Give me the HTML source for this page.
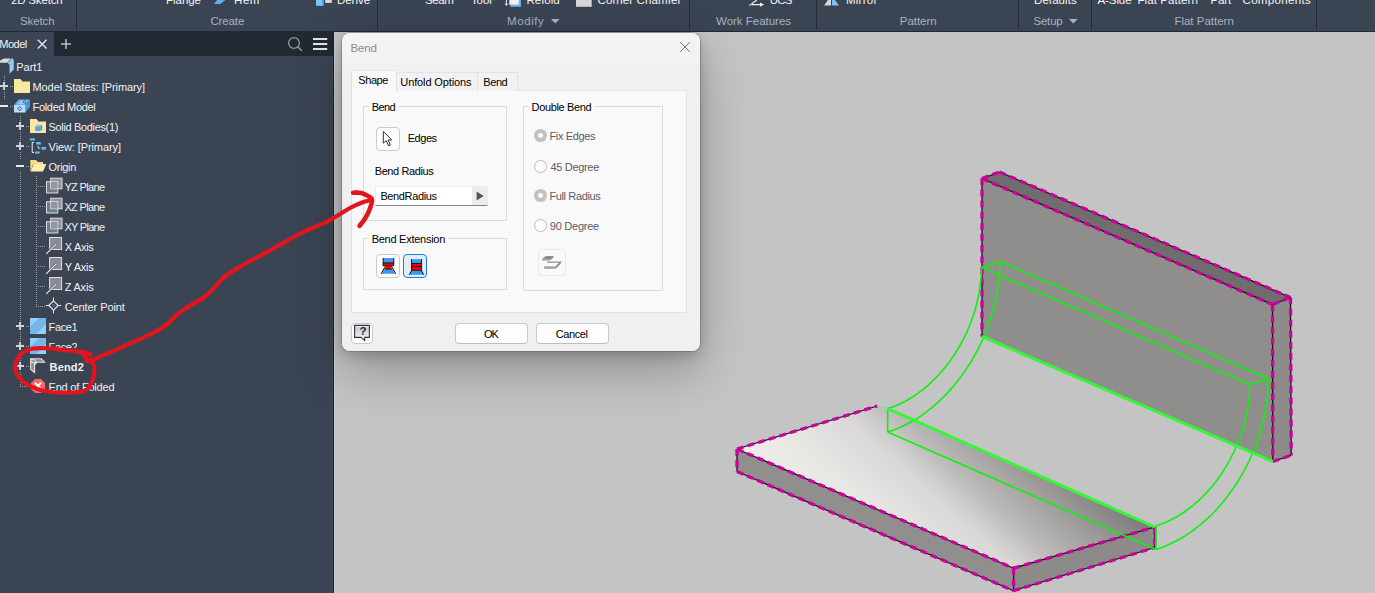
<!DOCTYPE html>
<html lang="en">
<head>
<meta charset="utf-8">
<title>Bend</title>
<style>
*{box-sizing:border-box;margin:0;padding:0}
html,body{width:1375px;height:593px;overflow:hidden}
body{position:relative;background:#c4c4c4;font-family:"Liberation Sans",sans-serif;font-size:11px;color:#e9e9e9}
.a{position:absolute}
#ribbon{position:absolute;left:0;top:0;width:1375px;height:31px;background:#3b4453}
#ribline{position:absolute;left:0;top:30.7px;width:1375px;height:1.3px;background:#222933}
.rdiv{position:absolute;top:0;width:1px;height:30px;background:#262c37}
.rlab{position:absolute;top:13.2px;height:16px;line-height:16px;font-size:11.5px;color:#a7b2c3;white-space:nowrap}
.rtop{position:absolute;top:-8.3px;height:16px;line-height:16px;font-size:11.5px;color:#f4f5f7;white-space:nowrap}
#panel{position:absolute;left:0;top:32px;width:334px;height:561px;background:#3b4453;border-right:1px solid #1c212b;box-shadow:inset -1px 0 0 #414a5a,1px 0 0 #cecece}
#tabbar{position:absolute;left:0;top:0;width:333px;height:24px;background:#222933}
#tabmodel{position:absolute;left:0;top:0;width:54px;height:24px;background:#3b4453}
.t{position:absolute;height:20px;line-height:20px;font-size:11px;color:#f2f2f2;white-space:nowrap}
.dv{position:absolute;width:0;border-left:1px dotted #8d94a0}
.dh{position:absolute;height:0;border-top:1px dotted #8d94a0}
#dlg{position:absolute;left:342px;top:33px;width:358px;height:318px;background:#f0f0f0;border-radius:8px;box-shadow:0 0 0 1px rgba(95,95,95,.42),0 20px 50px rgba(0,0,0,.26),0 4px 14px rgba(0,0,0,.2);color:#000;font-size:11px}
#dlgtitle{position:absolute;left:0;top:0;width:358px;height:30px;background:#f3f3f3;border-radius:8px 8px 0 0}
.d{position:absolute;white-space:nowrap;height:14px;line-height:14px;color:#000}
.grp{position:absolute;border:1px solid #dcdcdc}
.gl{position:absolute;background:#fafafa;padding:0 3px;height:14px;line-height:14px;white-space:nowrap;color:#000}
.btn{position:absolute;border:1px solid #c9c9c9;border-radius:4px;background:#fdfdfd}
</style>
</head>
<body>
<svg class="a" style="left:0;top:0" width="1375" height="593" viewBox="0 0 1375 593">
<defs>
<linearGradient id="gtop" gradientUnits="userSpaceOnUse" x1="0" y1="0" x2="0.855" y2="1.112" gradientTransform="matrix(276.6 119.20000000000005 140.20000000000005 -43 737 449)"><stop offset="0" stop-color="#efede9"/><stop offset="0.217" stop-color="#e8e6e3"/><stop offset="0.435" stop-color="#dad8d6"/><stop offset="0.5" stop-color="#cfcdcb"/><stop offset="0.565" stop-color="#c0bebc"/><stop offset="0.783" stop-color="#9d9b9a"/><stop offset="1" stop-color="#7b7978"/></linearGradient>
<linearGradient id="gback" x1="0" y1="0" x2="1" y2="1"><stop offset="0" stop-color="#8f8d8c"/><stop offset="1" stop-color="#939190"/></linearGradient>
</defs>
<polygon points="982.0,178.5 1272.5,304.5 1272.8,461.5 982.0,336.5" fill="#908e8d" />
<polygon points="982.0,178.5 999.6,172.0 1290.5,297.5 1272.5,304.5" fill="#6f6d6d" />
<polygon points="1272.5,304.5 1290.5,297.5 1291.2,455.3 1272.8,461.5" fill="#8e8c8b" />
<polygon points="737.0,449.0 877.2,406.0 1154.8,527.0 1013.6,568.2" fill="url(#gtop)" />
<polygon points="737.0,449.0 1013.6,568.2 1013.6,590.7 737.0,471.5" fill="#918f8e" />
<polygon points="1013.6,568.2 1154.8,527.0 1154.8,547.5 1013.6,590.7" fill="#8d8b8a" />
<path d="M982.0 178.5L999.6 172.0" stroke="#141414" stroke-width="1.25" fill="none"/>
<path d="M982.0 178.5L999.6 172.0" stroke="#c80399" stroke-width="3.3" stroke-dasharray="6.8 4.3" fill="none"/>
<path d="M999.6 172.0L1290.5 297.5" stroke="#141414" stroke-width="1.25" fill="none"/>
<path d="M999.6 172.0L1290.5 297.5" stroke="#c80399" stroke-width="3.3" stroke-dasharray="6.8 4.3" fill="none"/>
<path d="M982.0 178.5L1272.5 304.5" stroke="#141414" stroke-width="1.25" fill="none"/>
<path d="M982.0 178.5L1272.5 304.5" stroke="#c80399" stroke-width="3.3" stroke-dasharray="6.8 4.3" fill="none"/>
<path d="M1272.5 304.5L1290.5 297.5" stroke="#141414" stroke-width="1.25" fill="none"/>
<path d="M1272.5 304.5L1290.5 297.5" stroke="#c80399" stroke-width="3.3" stroke-dasharray="6.8 4.3" fill="none"/>
<path d="M1272.5 304.5L1272.8 461.5" stroke="#141414" stroke-width="1.25" fill="none"/>
<path d="M1272.5 304.5L1272.8 461.5" stroke="#c80399" stroke-width="3.3" stroke-dasharray="6.8 4.3" fill="none"/>
<path d="M1290.5 297.5L1291.2 455.3" stroke="#141414" stroke-width="1.25" fill="none"/>
<path d="M1290.5 297.5L1291.2 455.3" stroke="#c80399" stroke-width="3.3" stroke-dasharray="6.8 4.3" fill="none"/>
<path d="M1272.8 461.5L1291.2 455.3" stroke="#141414" stroke-width="1.25" fill="none"/>
<path d="M1272.8 461.5L1291.2 455.3" stroke="#c80399" stroke-width="3.3" stroke-dasharray="6.8 4.3" fill="none"/>
<path d="M982.0 178.5L982.0 336.5" stroke="#141414" stroke-width="1.25" fill="none"/>
<path d="M982.0 178.5L982.0 336.5" stroke="#c80399" stroke-width="3.3" stroke-dasharray="6.8 4.3" fill="none"/>
<path d="M737.0 449.0L877.2 406.0" stroke="#141414" stroke-width="1.25" fill="none"/>
<path d="M737.0 449.0L877.2 406.0" stroke="#c80399" stroke-width="3.3" stroke-dasharray="6.8 4.3" fill="none"/>
<path d="M737.0 449.0L1013.6 568.2" stroke="#141414" stroke-width="1.25" fill="none"/>
<path d="M737.0 449.0L1013.6 568.2" stroke="#c80399" stroke-width="3.3" stroke-dasharray="6.8 4.3" fill="none"/>
<path d="M737.0 449.0L737.0 471.5" stroke="#141414" stroke-width="1.25" fill="none"/>
<path d="M737.0 449.0L737.0 471.5" stroke="#c80399" stroke-width="3.3" stroke-dasharray="6.8 4.3" fill="none"/>
<path d="M737.0 471.5L1013.6 590.7" stroke="#141414" stroke-width="1.25" fill="none"/>
<path d="M737.0 471.5L1013.6 590.7" stroke="#c80399" stroke-width="3.3" stroke-dasharray="6.8 4.3" fill="none"/>
<path d="M1013.6 568.2L1013.6 590.7" stroke="#141414" stroke-width="1.25" fill="none"/>
<path d="M1013.6 568.2L1013.6 590.7" stroke="#c80399" stroke-width="3.3" stroke-dasharray="6.8 4.3" fill="none"/>
<path d="M1013.6 568.2L1154.8 527.0" stroke="#141414" stroke-width="1.25" fill="none"/>
<path d="M1013.6 568.2L1154.8 527.0" stroke="#c80399" stroke-width="3.3" stroke-dasharray="6.8 4.3" fill="none"/>
<path d="M1013.6 590.7L1154.8 547.5" stroke="#141414" stroke-width="1.25" fill="none"/>
<path d="M1013.6 590.7L1154.8 547.5" stroke="#c80399" stroke-width="3.3" stroke-dasharray="6.8 4.3" fill="none"/>
<path d="M1154.8 527.0L1154.8 547.5" stroke="#141414" stroke-width="1.25" fill="none"/>
<path d="M1154.8 527.0L1154.8 547.5" stroke="#c80399" stroke-width="3.3" stroke-dasharray="6.8 4.3" fill="none"/>
<polyline points="887.7,408.6 892.6,406.9 897.5,405.0 902.4,402.7 907.2,400.2 912.0,397.3 916.7,394.2 921.3,390.8 925.8,387.2 930.2,383.3 934.6,379.2 938.7,374.8 942.8,370.2 946.7,365.4 950.4,360.4 954.0,355.3 957.3,350.0 960.5,344.5 963.5,338.9 966.3,333.2 968.8,327.4 971.2,321.5 973.3,315.5 975.2,309.5 976.8,303.4 978.2,297.3 979.4,291.3 980.2,285.2 980.9,279.1 981.3,273.1 981.4,267.2" stroke="#0df20d" stroke-width="1.6" fill="none" stroke-linejoin="round"/>
<polyline points="887.7,432.1 893.6,430.1 899.4,427.8 905.3,425.0 911.0,422.0 916.8,418.6 922.4,414.8 927.9,410.7 933.4,406.3 938.7,401.6 943.9,396.7 948.9,391.4 953.7,385.9 958.4,380.1 962.8,374.1 967.1,367.9 971.2,361.5 975.0,354.9 978.6,348.1 981.9,341.2 985.0,334.2 987.8,327.1 990.3,319.9 992.5,312.6 994.5,305.3 996.2,297.9 997.5,290.6 998.6,283.2 999.4,275.9 999.8,268.7 1000.0,261.5" stroke="#0df20d" stroke-width="1.6" fill="none" stroke-linejoin="round"/>
<polyline points="1156.0,525.9 1160.9,524.2 1165.8,522.3 1170.7,520.0 1175.5,517.5 1180.3,514.6 1185.0,511.5 1189.6,508.1 1194.1,504.5 1198.5,500.6 1202.8,496.5 1207.0,492.1 1211.1,487.5 1215.0,482.7 1218.7,477.7 1222.3,472.6 1225.6,467.3 1228.8,461.8 1231.8,456.2 1234.6,450.5 1237.1,444.7 1239.5,438.8 1241.6,432.8 1243.5,426.8 1245.1,420.7 1246.5,414.6 1247.7,408.6 1248.5,402.5 1249.2,396.4 1249.6,390.4 1249.7,384.5" stroke="#0df20d" stroke-width="1.6" fill="none" stroke-linejoin="round"/>
<polyline points="1156.0,549.4 1161.9,547.4 1167.7,545.1 1173.6,542.3 1179.3,539.3 1185.1,535.9 1190.7,532.1 1196.2,528.0 1201.7,523.6 1207.0,518.9 1212.2,514.0 1217.2,508.7 1222.0,503.2 1226.7,497.4 1231.1,491.4 1235.4,485.2 1239.5,478.8 1243.3,472.2 1246.9,465.4 1250.2,458.5 1253.3,451.5 1256.1,444.4 1258.6,437.2 1260.8,429.9 1262.8,422.6 1264.5,415.2 1265.8,407.9 1266.9,400.5 1267.7,393.2 1268.1,386.0 1268.3,378.8" stroke="#0df20d" stroke-width="1.6" fill="none" stroke-linejoin="round"/>
<polyline points="887.7,408.6 887.7,432.1" stroke="#0df20d" stroke-width="1.6" fill="none" stroke-linejoin="round"/>
<polyline points="1156.0,525.9 1156.0,549.4" stroke="#0df20d" stroke-width="1.6" fill="none" stroke-linejoin="round"/>
<polyline points="887.7,432.1 1156.0,549.4" stroke="#0df20d" stroke-width="1.6" fill="none" stroke-linejoin="round"/>
<polyline points="981.4,267.2 1000.0,261.5" stroke="#0df20d" stroke-width="1.6" fill="none" stroke-linejoin="round"/>
<polyline points="1249.7,384.5 1268.3,378.8" stroke="#0df20d" stroke-width="1.6" fill="none" stroke-linejoin="round"/>
<polyline points="981.4,267.2 1249.7,384.5" stroke="#0df20d" stroke-width="1.6" fill="none" stroke-linejoin="round"/>
<polyline points="1000.0,261.5 1268.3,378.8" stroke="#0df20d" stroke-width="1.6" fill="none" stroke-linejoin="round"/>
<polyline points="877.2,406.0 887.7,408.6" stroke="#7fe07f" stroke-width="1.2" fill="none" stroke-linejoin="round"/>
<polyline points="887.7,408.6 1154.8,527.0" stroke="#36f636" stroke-width="3" fill="none" stroke-linejoin="round"/>
<polyline points="982.0,336.5 1272.8,461.5" stroke="#36f636" stroke-width="3" fill="none" stroke-linejoin="round"/>
</svg>
<div id="ribbon">
<div class="rdiv" style="left:76px"></div><div class="rdiv" style="left:377px"></div><div class="rdiv" style="left:689px"></div><div class="rdiv" style="left:816px"></div><div class="rdiv" style="left:1018px"></div><div class="rdiv" style="left:1091px"></div><div class="rdiv" style="left:1316px"></div><div class="rlab" style="left:20px;letter-spacing:-0.112px">Sketch</div><div class="rlab" style="left:210.4px;letter-spacing:-0.122px">Create</div><div class="rlab" style="left:507px;letter-spacing:0.587px">Modify</div><div class="rlab" style="left:716px;letter-spacing:-0.016px">Work Features</div><div class="rlab" style="left:899.8px;letter-spacing:-0.04px">Pattern</div><div class="rlab" style="left:1033.4px;letter-spacing:-0.173px">Setup</div><div class="rlab" style="left:1174.4px;letter-spacing:-0.004px">Flat Pattern</div><svg class="a" style="left:551px;top:19px" width="9" height="5" viewBox="0 0 9 5"><path d="M0 0H8.6L4.3 4.4Z" fill="#a7b2c3"/></svg><svg class="a" style="left:1069px;top:19px" width="9" height="5" viewBox="0 0 9 5"><path d="M0 0H8.6L4.3 4.4Z" fill="#a7b2c3"/></svg><div class="rtop" style="left:11px;letter-spacing:-0.174px">2D Sketch</div><div class="rtop" style="left:166px;letter-spacing:-0.029px">Flange</div><div class="rtop" style="left:234px;letter-spacing:0.573px">Hem</div><div class="rtop" style="left:337px;letter-spacing:-0.039px">Derive</div><div class="rtop" style="left:425px;letter-spacing:-0.387px">Seam</div><div class="rtop" style="left:471px;letter-spacing:-0.127px">Tool</div><div class="rtop" style="left:526.5px;letter-spacing:-0.008px">Refold</div><div class="rtop" style="left:597.5px;letter-spacing:0.11px">Corner Chamfer</div><div class="rtop" style="left:769.7px;letter-spacing:-0.827px">UCS</div><div class="rtop" style="left:846px;letter-spacing:0.245px">Mirror</div><div class="rtop" style="left:1034px;letter-spacing:0.077px">Defaults</div><div class="rtop" style="left:1097.5px;letter-spacing:-0.089px">A-Side</div><div class="rtop" style="left:1137.5px;letter-spacing:0.087px">Flat Pattern</div><div class="rtop" style="left:1210.5px;letter-spacing:-0.148px">Part</div><div class="rtop" style="left:1242.5px;letter-spacing:0.328px">Components</div><svg class="a" style="left:0;top:0" width="1375" height="12" viewBox="0 0 1375 12">
<path d="M214 3.9H220.3L225.4 0H217.2Z" fill="#5fb0f0"/>
<rect x="316" y="0" width="7.6" height="5.8" fill="#7cc4f8"/><rect x="322.2" y="0" width="1.4" height="5.8" fill="#4a9fe0"/>
<rect x="325.2" y="0" width="6.6" height="2.9" fill="#dcdcdc"/>
<path d="M506.4 0V5M505 3.6L506.4 5.4L507.8 3.6" stroke="#f0f0f0" stroke-width="1" fill="none"/>
<path d="M510.3 4.8H518.9V0H520.9V6.8H510.3Z" fill="#6ab8f5"/>
<rect x="509.3" y="0" width="9.6" height="4.8" fill="#f0f0f0"/>
<rect x="576" y="0" width="15.7" height="6.8" fill="#d6d6d6"/>
<rect x="749" y="3.8" width="2" height="2" fill="#4db0f5"/>
<path d="M751.2 4.6H763M751.4 4L756.8 0" stroke="#f0f0f0" stroke-width="1.1" fill="none"/>
<path d="M760 2.4L764 4.6L760 6.8Z" fill="#f0f0f0"/>
<path d="M824 5.6H831V0H828Z" fill="#d8d8d8"/>
<path d="M832 5.6H839L835 0H832Z" fill="#7cc4f8"/>
</svg>
</div>
<div id="ribline"></div>
<div id="panel">
<div id="tabbar"><div id="tabmodel"></div></div>
<div class="a" style="left:0;top:-32px;width:333px;height:593px;overflow:hidden">
<div class="t" style="left:-0.8px;top:33.7px;letter-spacing:-0.474px;">Model</div>
<svg class="a" style="left:36px;top:37.6px" width="12" height="12" viewBox="0 0 12 12"><path d="M1.8 1.8L10.6 10.6M10.6 1.8L1.8 10.6" stroke="#e4e6ea" stroke-width="1.4" fill="none"/></svg>
<svg class="a" style="left:60px;top:38px" width="12" height="12" viewBox="0 0 12 12"><path d="M6 1V11M1 6H11" stroke="#b9bec7" stroke-width="1.5" fill="none"/></svg>
<svg class="a" style="left:286px;top:36px" width="18" height="18" viewBox="0 0 18 18"><circle cx="8" cy="7" r="5.4" stroke="#939599" stroke-width="1.3" fill="none"/><path d="M11.9 10.9L15.8 14.8" stroke="#939599" stroke-width="1.5"/></svg>
<svg class="a" style="left:313px;top:37px" width="15" height="14" viewBox="0 0 15 14"><path d="M0 2H14.2M0 7H14.2M0 12H14.2" stroke="#e4e4e4" stroke-width="2.2"/></svg>
<div class="a" style="left:4px;top:76px;width:1px;height:6px;background:repeating-linear-gradient(to bottom,#98a0ac 0 1px,transparent 1px 2px)"></div>
<div class="a" style="left:4px;top:92px;width:1px;height:8px;background:repeating-linear-gradient(to bottom,#98a0ac 0 1px,transparent 1px 2px)"></div>
<div class="a" style="left:10px;top:86px;width:3px;height:1px;background:repeating-linear-gradient(to right,#98a0ac 0 1px,transparent 1px 2px)"></div>
<div class="a" style="left:10px;top:106px;width:3px;height:1px;background:repeating-linear-gradient(to right,#98a0ac 0 1px,transparent 1px 2px)"></div>
<div class="a" style="left:20px;top:116px;width:1px;height:6px;background:repeating-linear-gradient(to bottom,#98a0ac 0 1px,transparent 1px 2px)"></div>
<div class="a" style="left:20px;top:132px;width:1px;height:10px;background:repeating-linear-gradient(to bottom,#98a0ac 0 1px,transparent 1px 2px)"></div>
<div class="a" style="left:20px;top:152px;width:1px;height:8px;background:repeating-linear-gradient(to bottom,#98a0ac 0 1px,transparent 1px 2px)"></div>
<div class="a" style="left:20px;top:172px;width:1px;height:150px;background:repeating-linear-gradient(to bottom,#98a0ac 0 1px,transparent 1px 2px)"></div>
<div class="a" style="left:20px;top:332px;width:1px;height:10px;background:repeating-linear-gradient(to bottom,#98a0ac 0 1px,transparent 1px 2px)"></div>
<div class="a" style="left:20px;top:352px;width:1px;height:10px;background:repeating-linear-gradient(to bottom,#98a0ac 0 1px,transparent 1px 2px)"></div>
<div class="a" style="left:20px;top:372px;width:1px;height:15px;background:repeating-linear-gradient(to bottom,#98a0ac 0 1px,transparent 1px 2px)"></div>
<div class="a" style="left:26px;top:126px;width:3px;height:1px;background:repeating-linear-gradient(to right,#98a0ac 0 1px,transparent 1px 2px)"></div>
<div class="a" style="left:26px;top:146px;width:3px;height:1px;background:repeating-linear-gradient(to right,#98a0ac 0 1px,transparent 1px 2px)"></div>
<div class="a" style="left:26px;top:166px;width:3px;height:1px;background:repeating-linear-gradient(to right,#98a0ac 0 1px,transparent 1px 2px)"></div>
<div class="a" style="left:26px;top:326px;width:3px;height:1px;background:repeating-linear-gradient(to right,#98a0ac 0 1px,transparent 1px 2px)"></div>
<div class="a" style="left:26px;top:346px;width:3px;height:1px;background:repeating-linear-gradient(to right,#98a0ac 0 1px,transparent 1px 2px)"></div>
<div class="a" style="left:26px;top:366px;width:3px;height:1px;background:repeating-linear-gradient(to right,#98a0ac 0 1px,transparent 1px 2px)"></div>
<div class="a" style="left:20px;top:386px;width:9px;height:1px;background:repeating-linear-gradient(to right,#98a0ac 0 1px,transparent 1px 2px)"></div>
<div class="a" style="left:36px;top:176px;width:1px;height:130px;background:repeating-linear-gradient(to bottom,#98a0ac 0 1px,transparent 1px 2px)"></div>
<div class="a" style="left:36px;top:186px;width:9px;height:1px;background:repeating-linear-gradient(to right,#98a0ac 0 1px,transparent 1px 2px)"></div>
<div class="a" style="left:36px;top:206px;width:9px;height:1px;background:repeating-linear-gradient(to right,#98a0ac 0 1px,transparent 1px 2px)"></div>
<div class="a" style="left:36px;top:226px;width:9px;height:1px;background:repeating-linear-gradient(to right,#98a0ac 0 1px,transparent 1px 2px)"></div>
<div class="a" style="left:36px;top:246px;width:9px;height:1px;background:repeating-linear-gradient(to right,#98a0ac 0 1px,transparent 1px 2px)"></div>
<div class="a" style="left:36px;top:266px;width:9px;height:1px;background:repeating-linear-gradient(to right,#98a0ac 0 1px,transparent 1px 2px)"></div>
<div class="a" style="left:36px;top:286px;width:9px;height:1px;background:repeating-linear-gradient(to right,#98a0ac 0 1px,transparent 1px 2px)"></div>
<div class="a" style="left:36px;top:306px;width:9px;height:1px;background:repeating-linear-gradient(to right,#98a0ac 0 1px,transparent 1px 2px)"></div>
<svg class="a" style="left:0px;top:82.2px" width="8" height="8" viewBox="0 0 8 8"><path d="M0 4H8M4 0V8" stroke="#d0d4db" stroke-width="1.9" fill="none"/></svg>
<svg class="a" style="left:0px;top:101.8px" width="8" height="8" viewBox="0 0 8 8"><path d="M0 4H8" stroke="#f2f2f2" stroke-width="1.9" fill="none"/></svg>
<svg class="a" style="left:16px;top:122.2px" width="8" height="8" viewBox="0 0 8 8"><path d="M0 4H8M4 0V8" stroke="#d0d4db" stroke-width="1.9" fill="none"/></svg>
<svg class="a" style="left:16px;top:142.2px" width="8" height="8" viewBox="0 0 8 8"><path d="M0 4H8M4 0V8" stroke="#d0d4db" stroke-width="1.9" fill="none"/></svg>
<svg class="a" style="left:16px;top:161.8px" width="8" height="8" viewBox="0 0 8 8"><path d="M0 4H8" stroke="#f2f2f2" stroke-width="1.9" fill="none"/></svg>
<svg class="a" style="left:16px;top:322.2px" width="8" height="8" viewBox="0 0 8 8"><path d="M0 4H8M4 0V8" stroke="#d0d4db" stroke-width="1.9" fill="none"/></svg>
<svg class="a" style="left:16px;top:342.2px" width="8" height="8" viewBox="0 0 8 8"><path d="M0 4H8M4 0V8" stroke="#d0d4db" stroke-width="1.9" fill="none"/></svg>
<svg class="a" style="left:16px;top:362.2px" width="8" height="8" viewBox="0 0 8 8"><path d="M0 4H8M4 0V8" stroke="#d0d4db" stroke-width="1.9" fill="none"/></svg>
<svg class="a" style="left:-1px;top:57px" width="16" height="18" viewBox="0 0 16 18"><path d="M1 3.6L5 1.5H11.8L8.2 5.7H1Z" fill="#dcdcdc"/><path d="M8.5 6L13 1C14.2 1.6 14.8 2.8 14.8 4.4V12.5L10.5 16.8V8.4C10.5 7.2 9.8 6.5 8.5 6Z" fill="#8ccdf8"/></svg>
<svg class="a" style="left:14px;top:79px" width="16" height="14" viewBox="0 0 16 14"><path d="M0 0H6.5L8.5 2.4H16V14H0Z" fill="#fbe8a0"/></svg>
<svg class="a" style="left:14px;top:98.6px" width="16" height="14" viewBox="0 0 16 14"><path d="M0 6L4.5 0.5H16L11.5 6Z" fill="#5ea8e4"/><path d="M3.2 5.2L6 1.6H14L11 5.2Z" fill="#8ccdf8"/><path d="M11.5 6L16 0.5V7.5L11.5 13.5Z" fill="#4a96dc"/><rect x="0" y="6" width="11.5" height="7.5" fill="#b9defb"/><path d="M5.7 7.6L7.8 9.7L5.7 11.8L3.6 9.7Z" fill="none" stroke="#2c3e57" stroke-width="0.9"/><path d="M10.5 1.6L12 3.1L10.5 4.6L9 3.1Z" fill="none" stroke="#2c3e57" stroke-width="0.8"/></svg>
<svg class="a" style="left:30px;top:119px" width="16" height="14" viewBox="0 0 16 14"><path d="M0 0H6.5L8.5 2.4H16V14H0Z" fill="#fbe8a0"/><path d="M5.2 7.5L7 5.8H12.2L10.6 7.5Z" fill="#7cc0f3"/><rect x="5.2" y="7.5" width="5.4" height="4.6" fill="#5aa6e4"/><path d="M10.6 7.5L12.2 5.8V10.4L10.6 12.1Z" fill="#3e8ed8"/></svg>
<svg class="a" style="left:29px;top:138px" width="18" height="16" viewBox="0 0 18 16"><path d="M5 4.5H3.2V14.5H5" stroke="#f0f0f0" stroke-width="1" fill="none"/><rect x="0.8" y="0.4" width="5.2" height="2.1" fill="#6cb7ee"/><rect x="7.2" y="4" width="4.6" height="2.6" fill="#6cb7ee"/><rect x="12.5" y="9" width="4.5" height="2.6" fill="#6cb7ee"/><rect x="6" y="13.5" width="4.7" height="2.1" fill="#6cb7ee"/><path d="M9.2 8V10.2H11.2" stroke="#e8e8e8" stroke-width="0.9" fill="none"/></svg>
<svg class="a" style="left:30px;top:159px" width="17" height="13" viewBox="0 0 17 13"><path d="M0.3 1H6L8 3H13V5H3.5L0.3 12.5Z" fill="#f3dc8c"/><path d="M3.8 5H16.3L13 12.5H0.5Z" fill="#fdeeb0"/></svg>
<svg class="a" style="left:46px;top:177px" width="17" height="17" viewBox="0 0 17 17"><rect x="4.7" y="1.2" width="11.3" height="10.6" fill="#9494a0" stroke="#dedede" stroke-width="1"/><rect x="0.5" y="4.7" width="11.3" height="11.3" fill="#6f7c88" stroke="#dedede" stroke-width="1"/><path d="M4.7 4.7V11.8H11.8" stroke="#dedede" stroke-width="1" fill="none"/><rect x="5.2" y="5.2" width="6.1" height="6.1" fill="#9494a0"/></svg>
<svg class="a" style="left:46px;top:197px" width="17" height="17" viewBox="0 0 17 17"><rect x="4.7" y="1.2" width="11.3" height="10.6" fill="#9494a0" stroke="#dedede" stroke-width="1"/><rect x="0.5" y="4.7" width="11.3" height="11.3" fill="#6f7c88" stroke="#dedede" stroke-width="1"/><path d="M4.7 4.7V11.8H11.8" stroke="#dedede" stroke-width="1" fill="none"/><rect x="5.2" y="5.2" width="6.1" height="6.1" fill="#9494a0"/></svg>
<svg class="a" style="left:46px;top:217px" width="17" height="17" viewBox="0 0 17 17"><rect x="4.7" y="1.2" width="11.3" height="10.6" fill="#9494a0" stroke="#dedede" stroke-width="1"/><rect x="0.5" y="4.7" width="11.3" height="11.3" fill="#6f7c88" stroke="#dedede" stroke-width="1"/><path d="M4.7 4.7V11.8H11.8" stroke="#dedede" stroke-width="1" fill="none"/><rect x="5.2" y="5.2" width="6.1" height="6.1" fill="#9494a0"/></svg>
<svg class="a" style="left:45px;top:237px" width="18" height="18" viewBox="0 0 18 18"><rect x="4.6" y="0.5" width="12" height="12" fill="#8c8c98" stroke="#e2e2e2" stroke-width="1"/><path d="M1.2 16.8L11.3 7" stroke="#3b4453" stroke-width="2.4"/><path d="M1.2 16.8L11.3 7" stroke="#ececec" stroke-width="1.1"/></svg>
<svg class="a" style="left:45px;top:257px" width="18" height="18" viewBox="0 0 18 18"><rect x="4.6" y="0.5" width="12" height="12" fill="#8c8c98" stroke="#e2e2e2" stroke-width="1"/><path d="M1.2 16.8L11.3 7" stroke="#3b4453" stroke-width="2.4"/><path d="M1.2 16.8L11.3 7" stroke="#ececec" stroke-width="1.1"/></svg>
<svg class="a" style="left:45px;top:277px" width="18" height="18" viewBox="0 0 18 18"><rect x="4.6" y="0.5" width="12" height="12" fill="#8c8c98" stroke="#e2e2e2" stroke-width="1"/><path d="M1.2 16.8L11.3 7" stroke="#3b4453" stroke-width="2.4"/><path d="M1.2 16.8L11.3 7" stroke="#ececec" stroke-width="1.1"/></svg>
<svg class="a" style="left:45px;top:297px" width="17" height="17" viewBox="0 0 17 17"><path d="M8.5 0.5V16.5M0.8 8.5H16.2" stroke="#e6e6e6" stroke-width="1"/><path d="M8.5 3.8L13.2 8.5L8.5 13.2L3.8 8.5Z" fill="#3b4453" stroke="#e6e6e6" stroke-width="1.2"/><rect x="7" y="7" width="3" height="3" fill="#55606e"/></svg>
<svg class="a" style="left:30px;top:318px" width="16" height="16" viewBox="0 0 16 16"><rect width="16" height="16" fill="#7ab5e9"/><path d="M0 0H9L0 9Z" fill="#8ed0fe"/><path d="M16 6V16H6Z" fill="#8ed0fe"/></svg>
<svg class="a" style="left:30px;top:338px" width="16" height="16" viewBox="0 0 16 16"><rect width="16" height="16" fill="#7ab5e9"/><path d="M0 0H9L0 9Z" fill="#8ed0fe"/><path d="M16 6V16H6Z" fill="#8ed0fe"/></svg>
<svg class="a" style="left:24px;top:354px" width="30" height="26" viewBox="0 0 30 26"><g transform="translate(-24,-354)"><path d="M30.1 358.2H41.5L45.8 362.7H37.6Q35.1 363.6 35.1 366.2V373.8L30.1 369.4Z" fill="#e6e6e6"/><path d="M34.6 359.3H41L43.4 361.7H36.9Z" fill="#8a8a96"/><path d="M31.2 362.4L33.9 363.6V371.3L31.2 368.9Z" fill="#8a8a96"/><path d="M31.3 359.9L33.7 359.4L36 361.4L34.2 362.8L31.3 361.6Z" fill="#9c9ca6"/></g></svg>
<svg class="a" style="left:31px;top:379px" width="14" height="14" viewBox="0 0 14 14"><path d="M4.1 0H9.9L14 4.1V9.9L9.9 14H4.1L0 9.9V4.1Z" fill="#f96666"/><path d="M4 3.6L10 10.4M10 3.6L4 10.4" stroke="#fff" stroke-width="2"/></svg>
<div class="t" style="left:16.2px;top:57px;letter-spacing:0.001px;">Part1</div>
<div class="t" style="left:32.5px;top:77px;letter-spacing:-0.079px;">Model States: [Primary]</div>
<div class="t" style="left:32.5px;top:97px;letter-spacing:-0.305px;">Folded Model</div>
<div class="t" style="left:48.6px;top:117px;letter-spacing:-0.346px;">Solid Bodies(1)</div>
<div class="t" style="left:48.6px;top:137px;letter-spacing:-0.098px;">View: [Primary]</div>
<div class="t" style="left:48.6px;top:157px;letter-spacing:-0.324px;">Origin</div>
<div class="t" style="left:64.4px;top:177px;letter-spacing:-0.656px;">YZ Plane</div>
<div class="t" style="left:64.4px;top:197px;letter-spacing:-0.656px;">XZ Plane</div>
<div class="t" style="left:64.4px;top:217px;letter-spacing:-0.709px;">XY Plane</div>
<div class="t" style="left:64.7px;top:237px;letter-spacing:-0.296px;">X Axis</div>
<div class="t" style="left:64.7px;top:257px;letter-spacing:-0.262px;">Y Axis</div>
<div class="t" style="left:64.7px;top:277px;letter-spacing:-0.192px;">Z Axis</div>
<div class="t" style="left:64.7px;top:297px;letter-spacing:-0.088px;">Center Point</div>
<div class="t" style="left:48.6px;top:317px;letter-spacing:-0.356px;">Face1</div>
<div class="t" style="left:48.6px;top:337px;letter-spacing:-0.356px;height:11px;overflow:hidden;">Face2</div>
<div class="t" style="left:49.6px;top:357px;letter-spacing:0.135px;font-weight:bold;">Bend2</div>
<div class="t" style="left:48.6px;top:377px;letter-spacing:-0.215px;">End of Folded</div>
</div>
</div>
<div id="dlg"><div id="dlgtitle"></div>
<div class="a" style="left:-342px;top:-33px;width:1375px;height:593px">
<div class="a" style="left:342px;top:63px;width:358px;height:288px;background:#f0f0f0;border-radius:0 0 8px 8px"></div>
<div class="d" style="left:350.5px;top:41.4px;letter-spacing:-0.14px;color:#8b8b8b;font-size:11.5px;">Bend</div>
<svg class="a" style="left:679px;top:41px" width="12" height="12" viewBox="0 0 12 12"><path d="M1.2 1.2L10.8 10.8M10.8 1.2L1.2 10.8" stroke="#727272" stroke-width="1" fill="none"/></svg>
<div class="a" style="left:351px;top:90px;width:336px;height:223px;background:#f9f9f9;border:1px solid #e3e3e3"></div>
<div class="a" style="left:396px;top:72px;width:82px;height:19px;background:#f2f2f2;border:1px solid #e3e3e3;border-bottom:none"></div>
<div class="a" style="left:477px;top:72px;width:41px;height:19px;background:#f2f2f2;border:1px solid #e3e3e3;border-bottom:none"></div>
<div class="a" style="left:351px;top:70px;width:46px;height:22px;background:#f9f9f9;border:1px solid #e3e3e3;border-bottom:none;border-radius:2px 2px 0 0"></div>
<div class="d" style="left:358.3px;top:73.4px;letter-spacing:-0.423px;color:#000;font-size:11px;">Shape</div>
<div class="d" style="left:400.3px;top:74.9px;letter-spacing:-0.112px;color:#000;font-size:11px;">Unfold Options</div>
<div class="d" style="left:483.3px;top:74.9px;letter-spacing:-0.426px;color:#000;font-size:11px;">Bend</div>
<div class="grp" style="left:363px;top:106px;width:144px;height:115px"></div>
<div class="a" style="left:368.7px;top:104px;width:29.3px;height:5px;background:#f9f9f9"></div>
<div class="d" style="left:371.7px;top:100.2px;letter-spacing:-0.601px;color:#000;font-size:11px;">Bend</div>
<div class="grp" style="left:363px;top:238px;width:144px;height:52px"></div>
<div class="a" style="left:368.7px;top:236px;width:79.4px;height:5px;background:#f9f9f9"></div>
<div class="d" style="left:371.7px;top:232.20000000000002px;letter-spacing:-0.262px;color:#000;font-size:11px;">Bend Extension</div>
<div class="grp" style="left:523px;top:106px;width:140px;height:185px"></div>
<div class="a" style="left:528.6px;top:104px;width:65.7px;height:5px;background:#f9f9f9"></div>
<div class="d" style="left:531.6px;top:100.2px;letter-spacing:-0.355px;color:#000;font-size:11px;">Double Bend</div>
<div class="btn" style="left:376px;top:127px;width:24px;height:24px"></div>
<svg class="a" style="left:381px;top:130px" width="14" height="18" viewBox="0 0 14 18"><path d="M2.3 1.5V13.2L5.2 10.6L7.6 15.8L9.4 15L7.1 9.9H10.8Z" fill="#fff" stroke="#1a1a1a" stroke-width="0.9" stroke-linejoin="round"/></svg>
<div class="d" style="left:407.7px;top:131.4px;letter-spacing:-0.441px;color:#000;font-size:11px;">Edges</div>
<div class="d" style="left:374.7px;top:164.4px;letter-spacing:-0.391px;color:#000;font-size:11px;">Bend Radius</div>
<div class="a" style="left:375px;top:186px;width:113px;height:20px;background:#fff;border:1px solid #ececec;border-bottom:1px solid #868686;border-radius:3px 3px 0 0"></div>
<div class="a" style="left:472px;top:187px;width:15px;height:18px;background:#ececec"></div>
<svg class="a" style="left:476px;top:191px" width="9" height="10" viewBox="0 0 9 10"><path d="M0.6 0.6V9.4L7.8 5Z" fill="#555"/></svg>
<div class="d" style="left:380.4px;top:189.20000000000002px;letter-spacing:-0.374px;color:#000;font-size:11px;">BendRadius</div>
<div class="btn" style="left:376px;top:254px;width:24px;height:24px"></div>
<div class="btn" style="left:403px;top:254px;width:24px;height:24px;background:#e0eefa;border:1.4px solid #1a7fd4"></div>
<svg class="a" style="left:372px;top:250px" width="60" height="32" viewBox="0 0 60 32"><g transform="translate(-372,-250)"><rect x="383" y="258.1" width="10.9" height="4.7" fill="#3c96f5"/><rect x="383" y="262.8" width="10.9" height="2.8" fill="#f00"/><path d="M386.6 265.8H390.3L392.3 269.2H384.6Z" fill="#f00"/><path d="M384.4 269.4H392.5L395.3 273.8H381.6Z" fill="#3c96f5"/><path d="M383.1 258V265.8M393.8 258V265.8M383 262.9H394M383 265.7H394M384.7 269.2H392.2" stroke="#0a0a0a" stroke-width="0.9" fill="none"/><path d="M385.6 265.8L381.2 273.8M391.3 265.8L395.7 273.8" stroke="#0a0a0a" stroke-width="1" fill="none"/><rect x="411.4" y="259.2" width="10.3" height="4.2" fill="#3c96f5"/><rect x="411.4" y="263.6" width="10.3" height="6.8" fill="#f00"/><path d="M411.5 270.5H421.6L423.4 274.8H409.7Z" fill="#3c96f5"/><path d="M411.5 259V270.6M421.6 259V270.6M411.4 263.5H421.7M411.4 266.6H421.7M411.4 270.3H421.7" stroke="#0a0a0a" stroke-width="0.9" fill="none"/><path d="M411.6 270.6L409.2 274.8M421.5 270.6L423.9 274.8" stroke="#0a0a0a" stroke-width="1" fill="none"/></g></svg>
<div class="a" style="left:533.9px;top:129.1px;width:12.8px;height:12.8px;border-radius:50%;background:#c2c2c2"></div><div class="a" style="left:537.9px;top:133.1px;width:4.8px;height:4.8px;border-radius:50%;background:#fff"></div>
<div class="d" style="left:549.4px;top:129.4px;letter-spacing:-0.336px;color:#5c5c66;font-size:11px;">Fix Edges</div>
<div class="a" style="left:533.9px;top:159.79999999999998px;width:12.8px;height:12.8px;border-radius:50%;background:#fcfcfc;border:1px solid #bdbdbd"></div>
<div class="d" style="left:550.4px;top:160.3px;letter-spacing:-0.308px;color:#5c5c66;font-size:11px;">45 Degree</div>
<div class="a" style="left:533.9px;top:189.2px;width:12.8px;height:12.8px;border-radius:50%;background:#c2c2c2"></div><div class="a" style="left:537.9px;top:193.2px;width:4.8px;height:4.8px;border-radius:50%;background:#fff"></div>
<div class="d" style="left:549.4px;top:189.20000000000002px;letter-spacing:-0.366px;color:#5c5c66;font-size:11px;">Full Radius</div>
<div class="a" style="left:533.9px;top:218.79999999999998px;width:12.8px;height:12.8px;border-radius:50%;background:#fcfcfc;border:1px solid #bdbdbd"></div>
<div class="d" style="left:549.8px;top:219.3px;letter-spacing:-0.242px;color:#5c5c66;font-size:11px;">90 Degree</div>
<div class="btn" style="left:538px;top:249px;width:28px;height:27px;background:#f9f9f9;border-color:#e8e8e8"></div>
<svg class="a" style="left:541px;top:254px" width="22" height="17" viewBox="0 0 22 17"><path d="M1 5L5 2H12.4L8.4 5Z" fill="#8e8e8e"/><path d="M1 5H8.4V6.6H1Z" fill="#a8a8a8"/><path d="M8.4 5L12.4 2V3.6L8.4 6.6Z" fill="#777"/><path d="M6 8.2H19.6L14.6 13H3.2" stroke="#8e8e8e" stroke-width="1.2" fill="none"/><path d="M3.2 13H14.6V14.8H3.2Z" fill="#a0a0a0"/><path d="M14.6 13L19.6 8.2V9.8L14.6 14.8Z" fill="#8a8a8a"/></svg>
<div class="btn" style="left:351px;top:323px;width:22px;height:21px;background:#fff"></div>
<svg class="a" style="left:346px;top:318px" width="40" height="30" viewBox="0 0 40 30"><defs><linearGradient id="hg" x1="0" y1="0" x2="0" y2="1"><stop offset="0" stop-color="#fff"/><stop offset="0.15" stop-color="#c9cdd5"/><stop offset="1" stop-color="#fafafa"/></linearGradient></defs><path d="M8.6 7.4H23.4V19.4H18.7V22.7L15 19.4H8.6Z" fill="url(#hg)" stroke="#2c3440" stroke-width="1.1" stroke-linejoin="round"/></svg>
<div class="d" style="left:359.4px;top:325px;font-size:11.5px;font-weight:bold;color:#20262f;line-height:12px;height:12px">?</div>
<div class="btn" style="left:455px;top:323px;width:73px;height:21px;border-bottom-color:#bdbdbd"></div>
<div class="btn" style="left:536px;top:323px;width:73px;height:21px;border-bottom-color:#bdbdbd"></div>
<div class="d" style="left:483.9px;top:327.29999999999995px;letter-spacing:-1.053px;color:#000;font-size:11px;">OK</div>
<div class="d" style="left:555.7px;top:327.29999999999995px;letter-spacing:-0.408px;color:#000;font-size:11px;">Cancel</div>
</div>
</div>
<svg class="a" style="left:0;top:0" width="1375" height="593" viewBox="0 0 1375 593">
<path d="M90 354L80 351.9" stroke="#e3151c" stroke-width="4.8" fill="none" stroke-linecap="round"/>
<path d="M90.0 354.0C89.0 353.8 87.9 353.1 84.0 352.5C80.1 351.9 72.8 351.0 66.5 350.3C60.2 349.6 52.0 348.6 46.2 348.3C40.4 348.0 35.4 348.0 31.6 348.7C27.8 349.4 25.5 350.8 23.2 352.4C20.9 354.0 19.0 356.1 17.7 358.3C16.4 360.5 15.5 362.8 15.3 365.4C15.1 368.0 15.3 371.1 16.5 373.7C17.7 376.3 19.6 378.5 22.4 380.8C25.1 383.1 28.9 385.5 33.0 387.3C37.1 389.1 41.9 390.5 47.2 391.4C52.5 392.3 59.0 392.6 64.9 392.6C70.8 392.6 78.7 392.2 82.6 391.4C86.5 390.6 86.8 389.8 88.5 387.8C90.2 385.8 91.7 382.6 92.7 379.6C93.7 376.7 94.3 372.8 94.4 370.1C94.5 367.4 94.3 365.2 93.3 363.6C92.3 362.0 89.8 361.3 88.5 360.4C87.2 359.5 86.2 358.8 85.5 358.0C84.8 357.2 84.4 356.0 84.2 355.6" stroke="#e3151c" stroke-width="4.1" fill="none" stroke-linecap="round" stroke-linejoin="round"/>
<path d="M86.5 361.0C87.6 360.8 87.4 361.7 93.0 359.5C98.6 357.3 110.7 352.0 120.3 347.8C129.9 343.6 143.1 337.9 150.7 334.1C158.3 330.3 160.8 328.8 165.8 325.0C170.9 321.2 174.4 316.2 181.0 311.4C187.6 306.6 199.2 300.8 205.3 296.2C211.4 291.6 213.9 287.6 217.4 284.1C220.9 280.6 222.4 278.1 226.5 275.0C230.6 271.9 234.1 270.1 241.7 265.8C249.3 261.5 261.9 254.8 272.0 249.2C282.1 243.6 293.3 237.1 302.4 232.5C311.5 227.9 320.4 225.0 326.7 221.9C333.0 218.8 336.1 216.3 340.0 214.0C343.9 211.7 346.4 209.9 350.0 208.0C353.6 206.1 357.9 204.0 361.4 202.7C364.9 201.4 369.4 200.4 371.0 200.0" stroke="#e3151c" stroke-width="4.2" fill="none" stroke-linecap="round" stroke-linejoin="round"/>
<path d="M353.1 192.7C354.5 192.7 358.8 192.3 361.4 192.9C364.0 193.5 366.7 195.2 368.5 196.3C370.3 197.5 371.8 197.7 372.0 199.8C372.2 202.0 370.9 206.0 369.7 209.2C368.5 212.3 366.6 215.9 364.9 218.7C363.2 221.5 360.5 224.6 359.6 225.8" stroke="#e3151c" stroke-width="4.6" fill="none" stroke-linecap="round" stroke-linejoin="round"/>
</svg>
</body>
</html>
